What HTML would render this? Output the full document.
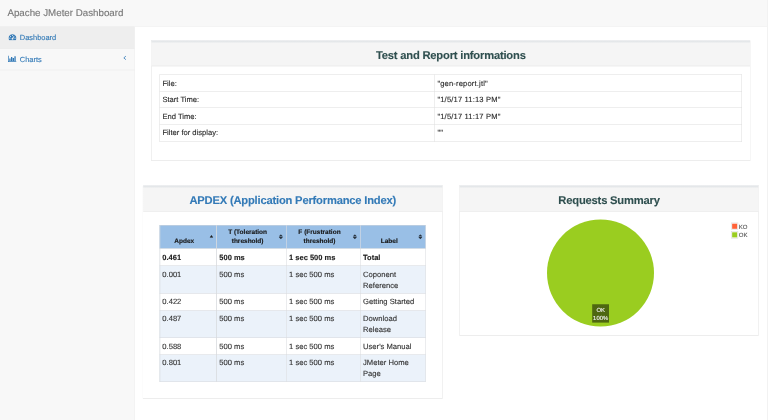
<!DOCTYPE html>
<html lang="en">
<head>
<meta charset="utf-8">
<title>Apache JMeter Dashboard</title>
<style>
html,body{margin:0;padding:0;background:#fff;}
html{overflow:hidden;}
body{width:768px;height:420px;overflow:hidden;position:relative;}
#page{position:absolute;left:0;top:0;width:768px;height:420px;overflow:hidden;background:#fff;}
*{box-sizing:border-box;}
#scale{position:absolute;left:0;top:0;width:3072px;height:1680px;overflow:hidden;transform:scale(0.25);transform-origin:0 0;filter:blur(1.4px);
  background:#fff;font-family:"Liberation Sans",Arial,sans-serif;font-size:30px;line-height:42.4px;color:#333;-webkit-text-stroke:0.48px currentColor;text-rendering:geometricPrecision;}
a{color:#337ab7;text-decoration:none;}
.abs{position:absolute;}
.nw{white-space:nowrap;}

/* top bar */
.navbar{position:absolute;left:0;top:0;width:3072px;height:106px;background:#f8f8f8;border-bottom:2px solid #ececec;}
.brand{position:absolute;left:29.6px;top:0;font-size:39.04px;line-height:102px;color:#777;white-space:nowrap;}
.edge{position:absolute;left:3068px;top:0;width:4px;height:1680px;background:#f2f2f2;}

/* side menu */
.sidebar{position:absolute;left:0;top:105px;width:540px;height:1575px;background:#f8f8f8;border-right:2px solid #eeeeee;}
.sidebar ul{list-style:none;margin:0;padding:0;}
.sidebar li{position:relative;height:89.8px;border-bottom:2px solid #e8e8e8;}
.sidebar li.second{height:86.4px;}
.sidebar li.second a{line-height:83.6px;}
.sidebar li.active{background:#eeeeee;}
.sidebar li a{display:block;height:85px;line-height:88px;padding-left:79.2px;font-size:29.8px;white-space:nowrap;}
.sidebar svg{position:absolute;}

/* panels */
.panel{position:absolute;background:#fff;border:2px solid #cacaca;border-top-color:#dde0e3;border-radius:2.4px;box-shadow:0 2px 2px rgba(0,0,0,.05);}
.panel-heading{position:absolute;left:0;top:0;right:0;height:104.2px;background:#f5f5f5 linear-gradient(to bottom,#e2e5e8 0,#e5e8ea 5.6px,#f4f4f4 10px,#f5f5f5 12px);border-bottom:2px solid #e4e4e4;}
.title{position:absolute;left:0;right:0;top:36.2px;text-align:center;font-weight:bold;color:#2f4f4f;font-size:44.8px;line-height:48px;letter-spacing:-0.8px;white-space:nowrap;}
.title a{color:#337ab7;}

table{border-collapse:collapse;border-spacing:0;}
.grid{position:absolute;left:65.4px;top:158.2px;width:1064.6px;height:627px;}
.grid i{position:absolute;display:block;background:#d6d9dd;}
.grid i.h{left:0;width:1064.6px;height:2.2px;}
.grid i.v{top:0;height:627px;width:2.2px;}
.info{position:absolute;left:31.6px;top:135.8px;width:2330px;table-layout:fixed;}
.info td{border:2px solid #dcdcdc;height:66px;padding:0 0 0 10px;font-size:30.4px;line-height:42.4px;color:#2a2a2a;vertical-align:top;white-space:nowrap;}
.info td div{padding-top:11.2px;}
.info tr.dn td div{padding-top:13.2px;}
.info tr.last td{height:69.2px;}
.info td.v{letter-spacing:0.6px;padding-left:10.4px;}

.apdex{position:absolute;left:65.4px;top:158.2px;width:1064.6px;table-layout:fixed;border-collapse:separate;}
.apdex th,.apdex td{border:0;}
.apdex th{background:#99bfe6;color:#151515;font-size:26px;font-weight:bold;text-align:center;vertical-align:bottom;height:93.8px;line-height:36.4px;padding:0 38px 11.4px 8px;position:relative;}
.apdex td{font-size:30.48px;line-height:44px;color:#333;vertical-align:top;padding:12.6px 0 0 11.2px;}
.apdex td:first-child{padding-left:10.8px;}
.apdex tr.r3 td,.apdex tr.r4 td{padding-top:10px;}
.apdex tr.r6 td{padding-top:9px;}
.apdex tr.odd td{background:#ebf2fa;}
.apdex tr.tot td{font-weight:bold;color:#222;font-size:30px;padding-top:14.6px;}
.sort{position:absolute;right:13.2px;top:37px;width:16.8px;height:20.4px;}
.sort.up{right:12.8px;top:40.2px;width:15.6px;height:10.8px;}
</style>
</head>
<body>
<div id="page">
<div id="scale">

<div class="navbar"><a class="brand" href="#">Apache JMeter Dashboard</a></div>

<div class="sidebar">
  <ul>
    <li class="active"><a href="#"><svg style="left:34px;top:31px;width:31.6px;height:25.6px" viewBox="0 0 16 12"><path fill="#337ab7" fill-rule="evenodd" d="M8 0a8 8 0 0 0-6.700 12.400h13.400A8 8 0 0 0 8 0zM8 1.500a1.100 1.100 0 1 1 0 2.200 1.100 1.100 0 0 1 0-2.200zM4.200 3.200a1.100 1.100 0 1 1 0 2.200 1.100 1.100 0 0 1 0-2.200zM2.800 6.800a1.100 1.100 0 1 1 0 2.200 1.100 1.100 0 0 1 0-2.200zM13.200 6.800a1.100 1.100 0 1 1 0 2.200 1.100 1.100 0 0 1 0-2.200zM11.300 3.300l.9.500-2.600 4.300a1.800 1.800 0 1 1-1.500-.8z"/></svg>Dashboard</a></li>
    <li class="second"><a href="#"><svg style="left:32.4px;top:27.4px;width:34px;height:26px" viewBox="0 0 17 13"><path fill="#337ab7" d="M0 0h1.400v11.600H17V13H0zM2.600 6.200h2.600v4.600H2.600zM6 3h2.600v7.800H6zM9.400 4.800h2.600v6H9.400zM12.800 1.500h2.600v9.300h-2.600z"/></svg>Charts<svg style="left:491.6px;top:27.2px;width:14px;height:19.2px" viewBox="0 0 7 9"><path d="M5.800 .9L1.700 4.500 5.800 8.100" fill="none" stroke="#3a80bb" stroke-width="1.700"/></svg></a></li>
  </ul>
</div>

<div class="panel" style="left:604px;top:160px;width:2398px;height:482px;">
  <div class="panel-heading" style="height:102.6px"><div class="title" style="top:35.8px;left:0.4px">Test and Report informations</div></div>
  <table class="info">
    <colgroup><col style="width:1099.6px"><col></colgroup>
    <tbody>
      <tr class="dn"><td><div>File:</div></td><td class="v"><div>"gen-report.jtl"</div></td></tr>
      <tr><td><div>Start Time:</div></td><td class="v"><div>"1/5/17 11:13 PM"</div></td></tr>
      <tr class="dn"><td><div>End Time:</div></td><td class="v"><div>"1/5/17 11:17 PM"</div></td></tr>
      <tr class="last"><td><div>Filter for display:</div></td><td class="v"><div>""</div></td></tr>
    </tbody>
  </table>
</div>

<div class="panel" style="left:571px;top:740px;width:1200px;height:854px;">
  <div class="panel-heading"><div class="title"><a href="#">APDEX (Application Performance Index)</a></div></div>
  <table class="apdex">
    <colgroup><col style="width:227.6px"><col style="width:279px"><col style="width:296px"><col></colgroup>
    <thead>
      <tr>
        <th>Apdex<svg class="sort up" viewBox="0 0 37 25" preserveAspectRatio="none"><path d="M0 25L18.500 0 37 25z" fill="#1c1c1c"/></svg></th>
        <th>T (Toleration threshold)<svg class="sort" viewBox="0 0 32 43" preserveAspectRatio="none"><path d="M0 19L16 0l16 19zM0 24l16 19 16-19z" fill="#2a3540"/></svg></th>
        <th>F (Frustration threshold)<svg class="sort" viewBox="0 0 32 43" preserveAspectRatio="none"><path d="M0 19L16 0l16 19zM0 24l16 19 16-19z" fill="#2a3540"/></svg></th>
        <th>Label<svg class="sort" viewBox="0 0 32 43" preserveAspectRatio="none"><path d="M0 19L16 0l16 19zM0 24l16 19 16-19z" fill="#2a3540"/></svg></th>
      </tr>
    </thead>
    <tbody>
      <tr class="tot" style="height:69px"><td>0.461</td><td>500 ms</td><td>1 sec 500 ms</td><td>Total</td></tr>
      <tr class="odd" style="height:111px"><td>0.001</td><td>500 ms</td><td>1 sec 500 ms</td><td>Coponent Reference</td></tr>
      <tr class="r3" style="height:68px"><td>0.422</td><td>500 ms</td><td>1 sec 500 ms</td><td>Getting Started</td></tr>
      <tr class="odd r4" style="height:110px"><td>0.487</td><td>500 ms</td><td>1 sec 500 ms</td><td>Download Release</td></tr>
      <tr style="height:67px"><td>0.588</td><td>500 ms</td><td>1 sec 500 ms</td><td>User's Manual</td></tr>
      <tr class="odd r6" style="height:109px"><td>0.801</td><td>500 ms</td><td>1 sec 500 ms</td><td>JMeter Home Page</td></tr>
    </tbody>
  </table>
  <div class="grid">
    <i class="h" style="top:0"></i><i class="h" style="top:91.8px"></i><i class="h" style="top:160.8px"></i><i class="h" style="top:271.8px"></i><i class="h" style="top:339.8px"></i><i class="h" style="top:449.8px"></i><i class="h" style="top:516.8px"></i><i class="h" style="top:625px"></i>
    <i class="v" style="left:0"></i><i class="v" style="left:226px"></i><i class="v" style="left:505.2px"></i><i class="v" style="left:801.2px"></i><i class="v" style="left:1062.4px"></i>
  </div>
</div>

<div class="panel" style="left:1837.2px;top:740px;width:1198px;height:602px;">
  <div class="panel-heading"><div class="title">Requests Summary</div></div>
  <svg class="abs" style="left:-4.2px;top:0;width:1200px;height:600px;" viewBox="0 0 300 150">
    <circle cx="141.750" cy="87.550" r="53.500" fill="#9acd20"/>
    <rect x="133.450" y="118.750" width="16.800" height="18.350" fill="#4e6711"/>
    <text x="141.900" y="126.650" text-anchor="middle" font-family="Liberation Sans, Arial, sans-serif" font-size="5.900" fill="#f6f6f6" stroke="#f6f6f6" stroke-width=".12">OK</text>
    <text x="141.900" y="134.650" text-anchor="middle" font-family="Liberation Sans, Arial, sans-serif" font-size="5.900" fill="#f6f6f6" stroke="#f6f6f6" stroke-width=".12">100%</text>
    <rect x="272.650" y="37.400" width="6.500" height="6.700" fill="#fff" stroke="#d8d8d8" stroke-width=".5"/>
    <rect x="273.400" y="38.200" width="5" height="5.100" fill="#ff6238"/>
    <rect x="272.650" y="46" width="6.500" height="6.700" fill="#fff" stroke="#d8d8d8" stroke-width=".5"/>
    <rect x="273.400" y="46.800" width="5" height="5.100" fill="#9acd20"/>
    <text x="280.100" y="43" font-family="Liberation Sans, Arial, sans-serif" font-size="6" fill="#505050" stroke="#505050" stroke-width=".1">KO</text>
    <text x="280.100" y="51.100" font-family="Liberation Sans, Arial, sans-serif" font-size="6" fill="#505050" stroke="#505050" stroke-width=".1">OK</text>
  </svg>
</div>

<div class="edge"></div>
</div>
</div>
</body>
</html>
